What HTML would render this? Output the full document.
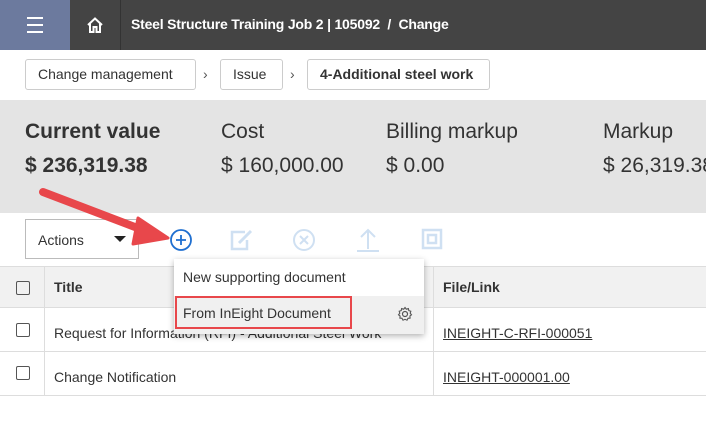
<!DOCTYPE html>
<html><head><style>
*{box-sizing:border-box;margin:0;padding:0}
body{width:706px;height:421px;overflow:hidden;background:#fff;font-family:"Liberation Sans",Arial,sans-serif;color:#333;position:relative}
.abs{position:absolute;white-space:nowrap}
.top{left:0;top:0;width:706px;height:50px;background:#444}
.menu{left:0;top:0;width:70px;height:50px;background:#6c7a9e}
.menu i{position:absolute;left:27px;width:16px;height:2px;background:#fff}
.sep{left:120px;top:0;width:1px;height:50px;background:#333}
.title{left:131px;top:16px;color:#fff;font-size:14px;font-weight:bold;letter-spacing:-0.2px}
.crumb{top:59px;height:31px;border:1px solid #ccc;border-radius:3px;font-size:14px;padding:0 12px;line-height:29px;color:#333}
.chev{top:66px;font-size:14px;color:#555}
.band{left:0;top:100px;width:706px;height:113px;background:#e4e4e4}
.lbl{top:120px;font-size:21px;color:#333}
.val{top:154px;font-size:21px;color:#333}
.hd{left:0;top:266px;width:706px;height:42px;background:#f1f1f1;border-top:1px solid #ddd;border-bottom:1px solid #ddd}
.row{left:0;width:706px;height:44px;border-bottom:1px solid #ddd}
.cb{width:14px;height:14px;border:1.5px solid #555;border-radius:2px;left:16px}
.vl{width:1px;background:#ddd}
.link{font-size:14px;text-decoration:underline;color:#333}
</style></head><body>
<div class="abs top"></div>
<div class="abs menu"><i style="top:17px"></i><i style="top:24px"></i><i style="top:31px"></i></div>
<svg class="abs" style="left:86px;top:16px" width="18" height="18" viewBox="0 0 18 18"><path d="M2 9 L9 2.5 L16 9 M4 7.5 V16 H7.5 V11 H10.5 V16 H14 V7.5" fill="none" stroke="#fff" stroke-width="2"/></svg>
<div class="abs sep"></div>
<div class="abs title">Steel Structure Training Job 2 | 105092 &nbsp;/ &nbsp;Change</div>

<div class="abs crumb" style="left:25px;width:171px">Change management</div>
<div class="abs chev" style="left:203px">›</div>
<div class="abs crumb" style="left:220px;width:63px">Issue</div>
<div class="abs chev" style="left:290px">›</div>
<div class="abs crumb" style="left:307px;width:183px;font-weight:bold">4-Additional steel work</div>

<div class="abs band"></div>
<div class="abs lbl" style="left:25px;font-weight:bold">Current value</div>
<div class="abs val" style="left:25px;font-weight:bold">$ 236,319.38</div>
<div class="abs lbl" style="left:221px">Cost</div>
<div class="abs val" style="left:221px">$ 160,000.00</div>
<div class="abs lbl" style="left:386px">Billing markup</div>
<div class="abs val" style="left:386px">$ 0.00</div>
<div class="abs lbl" style="left:603px">Markup</div>
<div class="abs val" style="left:603px">$ 26,319.38</div>

<div class="abs" style="left:25px;top:219px;width:114px;height:40px;border:1px solid #bbb;font-size:14px;padding:12px 12px;color:#333">Actions</div>
<div class="abs" style="left:114px;top:236px;width:0;height:0;border-left:6px solid transparent;border-right:6px solid transparent;border-top:6px solid #222"></div>
<svg class="abs" style="left:169px;top:228px" width="24" height="24"><circle cx="12" cy="12" r="10" fill="none" stroke="#1f6fd0" stroke-width="1.8"/><path d="M12 7V17M7 12H17" stroke="#1f6fd0" stroke-width="1.8"/></svg>
<svg class="abs" style="left:229px;top:228px" width="26" height="24"><path d="M16 4H3V21H18V12" fill="none" stroke="#cfe0f2" stroke-width="2.5"/><path d="M10 15L22 3" stroke="#cfe0f2" stroke-width="3"/></svg>
<svg class="abs" style="left:292px;top:228px" width="24" height="24"><circle cx="12" cy="12" r="10" fill="none" stroke="#cfe0f2" stroke-width="2"/><path d="M8 8L16 16M16 8L8 16" stroke="#cfe0f2" stroke-width="2"/></svg>
<svg class="abs" style="left:356px;top:226px" width="24" height="26"><path d="M12 23V4M5 11L12 4L19 11M1 25H23" fill="none" stroke="#cfe0f2" stroke-width="2"/></svg>
<svg class="abs" style="left:421px;top:228px" width="22" height="22"><rect x="2" y="2" width="18" height="18" fill="none" stroke="#cfe0f2" stroke-width="2.5"/><rect x="7" y="7" width="8" height="8" fill="none" stroke="#cfe0f2" stroke-width="2.5"/></svg>

<div class="abs hd"></div>
<div class="abs cb" style="top:281px"></div>
<div class="abs" style="left:54px;top:279px;font-size:14px;font-weight:bold">Title</div>
<div class="abs" style="left:443px;top:279px;font-size:14px;font-weight:bold">File/Link</div>
<div class="abs vl" style="left:44px;top:266px;height:130px"></div>
<div class="abs vl" style="left:433px;top:266px;height:130px"></div>
<div class="abs row" style="top:308px"></div>
<div class="abs cb" style="top:323px"></div>
<div class="abs" style="left:54px;top:325px;font-size:14px">Request for Information (RFI) - Additional Steel Work</div>
<div class="abs link" style="left:443px;top:325px">INEIGHT-C-RFI-000051</div>
<div class="abs row" style="top:352px"></div>
<div class="abs cb" style="top:366px"></div>
<div class="abs" style="left:54px;top:369px;font-size:14px">Change Notification</div>
<div class="abs link" style="left:443px;top:369px">INEIGHT-000001.00</div>

<div class="abs" style="left:174px;top:259px;width:250px;height:75px;background:#fff;box-shadow:0 2px 6px rgba(0,0,0,.3)"></div>
<div class="abs" style="left:183px;top:269px;font-size:14px;color:#333">New supporting document</div>
<div class="abs" style="left:174px;top:296px;width:250px;height:38px;background:#f0f0f0"></div>
<div class="abs" style="left:175px;top:296px;width:177px;height:33px;border:2.5px solid #e8474b"></div>
<div class="abs" style="left:183px;top:305px;font-size:14px;color:#333">From InEight Document</div>
<svg class="abs" style="left:397px;top:306px" width="16" height="16" viewBox="0 0 16 16"><circle cx="8" cy="8" r="2.5" fill="none" stroke="#555" stroke-width="1.2"/><path d="M8 1.5L9.3 3.2L11.4 2.6L11.8 4.6L13.8 5.2L13.2 7.2L14.5 8.8L12.9 10L13.1 12.1L11 12.3L10 14.2L8 13.3L6 14.2L5 12.3L2.9 12.1L3.1 10L1.5 8.8L2.8 7.2L2.2 5.2L4.2 4.6L4.6 2.6L6.7 3.2Z" fill="none" stroke="#555" stroke-width="1.1"/></svg>

<svg class="abs" style="left:0;top:0" width="706" height="421"><path d="M43 192L148 232" stroke="#e8474b" stroke-width="8" stroke-linecap="round"/><path d="M138 218L168 238L133 244Z" fill="#e8474b" stroke="#e8474b" stroke-width="3" stroke-linejoin="round"/></svg>
</body></html>
